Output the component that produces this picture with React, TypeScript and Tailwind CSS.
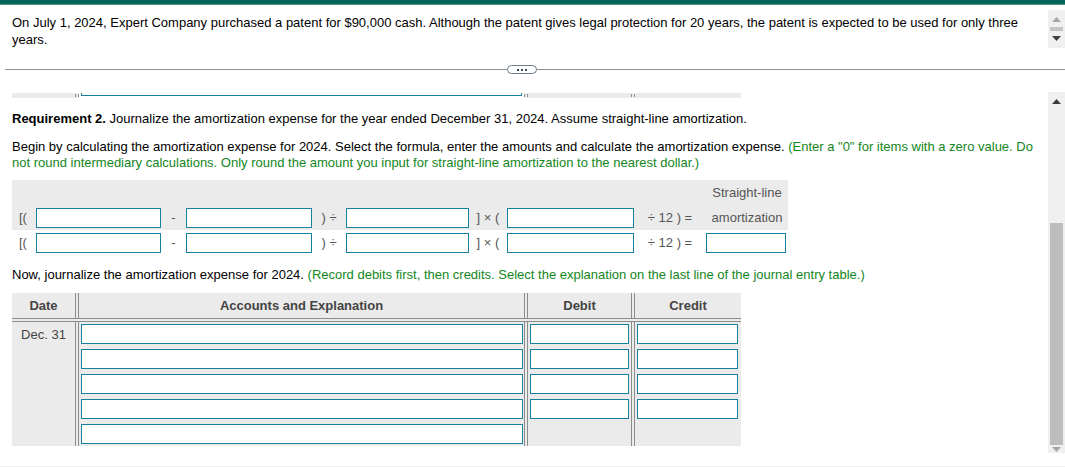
import React from "react";

const FONT = "font-[family-name:'Liberation_Sans',Arial,sans-serif]";

function Box({ w }: { w: string }) {
  return <div className={`${w} h-[20px] shrink-0 border border-[#16809f] bg-white`} />;
}

function Op({ w, children }: { w: string; children: React.ReactNode }) {
  return (
    <div className={`${w} h-[20px] shrink-0 text-center leading-[20px] text-[#555]`}>{children}</div>
  );
}

function Sep() {
  return <div className="border-x border-[#8c8c8c]" />;
}

function UpArrow({ color }: { color: string }) {
  return (
    <svg width="9" height="5" viewBox="0 0 9 5">
      <polygon points="0,5 4.5,0 9,5" fill={color} />
    </svg>
  );
}

function DownArrow({ color }: { color: string }) {
  return (
    <svg width="9" height="5" viewBox="0 0 9 5">
      <polygon points="0,0 9,0 4.5,5" fill={color} />
    </svg>
  );
}

const cols = "grid grid-cols-[63px_4px_445px_4px_103px_4px_106px]";

export default function App() {
  return (
    <div className={`${FONT} flex h-[467px] w-[1065px] flex-col overflow-hidden bg-white text-[13px] text-black`}>
      {/* header bar */}
      <div className="h-[4px] bg-[#02655a]" />
      <div className="h-[1px] bg-[#4f988e]" />

      {/* question pane */}
      <div className="flex h-[45px]">
        <div className="flex-1 px-[12px] pt-[9px] leading-[17px]">
          On July 1, 2024, Expert Company purchased a patent for $90,000 cash. Although the patent gives legal
          protection for 20 years, the patent is expected to be used for only three years.
        </div>
        <div className="mt-[5px] flex h-[38px] w-[17px] flex-col items-center bg-[#f0f0f0] pt-[7px]">
          <UpArrow color="#a6a6a6" />
          <div className="mt-[5px] h-[4px] w-[13px] bg-[#c4c4c4]" />
          <div className="mt-[5px]">
            <DownArrow color="#404040" />
          </div>
        </div>
      </div>

      {/* divider */}
      <div className="flex h-[39px] items-center pl-[5px]">
        <div className="h-[1px] w-[502px] bg-[#8d9199]" />
        <div className="flex h-[9px] w-[30px] items-center justify-center gap-[2px] rounded-full border border-[#6e7a86] bg-white">
          <span className="h-[2px] w-[2px] bg-[#3f4752]" />
          <span className="h-[2px] w-[2px] bg-[#3f4752]" />
          <span className="h-[2px] w-[2px] bg-[#3f4752]" />
        </div>
        <div className="h-[1px] flex-1 bg-[#8d9199]" />
      </div>

      {/* answer pane */}
      <div className="flex h-[377px]">
        <div className="flex-1 px-[12px] pt-[4px]">
          {/* column ruler */}
          <div className={`${cols} h-[5px] w-[729px] bg-[#ebebeb]`}>
            <div />
            <div className="mt-[1px] h-[3px] border-x border-[#8c8c8c]" />
            <div className="bg-white">
              <div className="mx-[2px] h-[3px] border-x border-b border-[#16809f]" />
            </div>
            <div className="mt-[1px] h-[3px] border-x border-[#8c8c8c]" />
            <div />
            <div className="mt-[1px] h-[3px] border-x border-[#8c8c8c]" />
            <div />
          </div>

          <p className="mt-[13px] leading-[16px]">
            <span className="font-bold">Requirement 2.</span> Journalize the amortization expense for the year
            ended December 31, 2024. Assume straight-line amortization.
          </p>

          <p className="mt-[12px] leading-[16px]">
            Begin by calculating the amortization expense for 2024. Select the formula, enter the amounts and
            calculate the amortization expense.{" "}
            <span className="text-[#13861c]">
              (Enter a "0" for items with a zero value. Do not round intermediary calculations. Only round the
              amount you input for straight-line amortization to the nearest dollar.)
            </span>
          </p>

          {/* formula */}
          <div className="mt-[9px] w-[776px]">
            <div className="flex h-[50px] items-end bg-[#ebebeb] pb-[2px]">
              <Op w="w-[24px] pl-[7px] text-left">[(</Op>
              <Box w="w-[125px]" />
              <Op w="w-[25px]">-</Op>
              <Box w="w-[126px]" />
              <Op w="w-[34px]">) ÷</Op>
              <Box w="w-[123px]" />
              <Op w="w-[38px]">] × (</Op>
              <Box w="w-[127px]" />
              <Op w="w-[72px]">÷ 12 ) =</Op>
              <div className="flex w-[82px] flex-col items-center gap-[5px] leading-[20px] text-[#555]">
                <span>Straight-line</span>
                <span>amortization</span>
              </div>
            </div>
            <div className="mt-[3px] flex items-end">
              <Op w="w-[24px] pl-[7px] text-left">[(</Op>
              <Box w="w-[125px]" />
              <Op w="w-[25px]">-</Op>
              <Box w="w-[126px]" />
              <Op w="w-[34px]">) ÷</Op>
              <Box w="w-[123px]" />
              <Op w="w-[38px]">] × (</Op>
              <Box w="w-[127px]" />
              <Op w="w-[72px]">÷ 12 ) =</Op>
              <Box w="w-[80px]" />
            </div>
          </div>

          <p className="mt-[14px] leading-[16px]">
            Now, journalize the amortization expense for 2024.{" "}
            <span className="text-[#13861c]">
              (Record debits first, then credits. Select the explanation on the last line of the journal entry
              table.)
            </span>
          </p>

          {/* journal entry table */}
          <div className="mt-[10px] w-[729px] bg-[#ebebeb] text-[#444]">
            <div className={`${cols} h-[25px] font-bold leading-[25px]`}>
              <div className="text-center">Date</div>
              <Sep />
              <div className="text-center">Accounts and Explanation</div>
              <Sep />
              <div className="text-center">Debit</div>
              <Sep />
              <div className="text-center">Credit</div>
            </div>
            <div className="h-[4px] border-y border-[#8c8c8c]" />
            <div className={cols}>
              <div className="pt-[3px] text-center leading-[20px]">Dec. 31</div>
              <Sep />
              <div className="flex flex-col gap-[5px] pb-[2px] pl-[2px] pr-[1px] pt-[2px]">
                <Box w="w-full" />
                <Box w="w-full" />
                <Box w="w-full" />
                <Box w="w-full" />
                <Box w="w-full" />
              </div>
              <Sep />
              <div className="flex flex-col gap-[5px] px-[2px] pt-[2px]">
                <Box w="w-full" />
                <Box w="w-full" />
                <Box w="w-full" />
                <Box w="w-full" />
              </div>
              <Sep />
              <div className="flex flex-col gap-[5px] pl-[2px] pr-[3px] pt-[2px]">
                <Box w="w-full" />
                <Box w="w-full" />
                <Box w="w-full" />
                <Box w="w-full" />
              </div>
            </div>
          </div>
        </div>

        <div className="mt-[3px] flex h-[361px] w-[17px] flex-col items-center bg-[#f0f0f0] pt-[7px]">
          <UpArrow color="#3c3c3c" />
          <div className="mt-[119px] h-[222px] w-[13px] bg-[#bdbdbd]" />
          <div className="mt-[2px]">
            <DownArrow color="#a6a6a6" />
          </div>
        </div>
      </div>

      <div className="h-[1px] bg-[#ececec]" />
    </div>
  );
}
